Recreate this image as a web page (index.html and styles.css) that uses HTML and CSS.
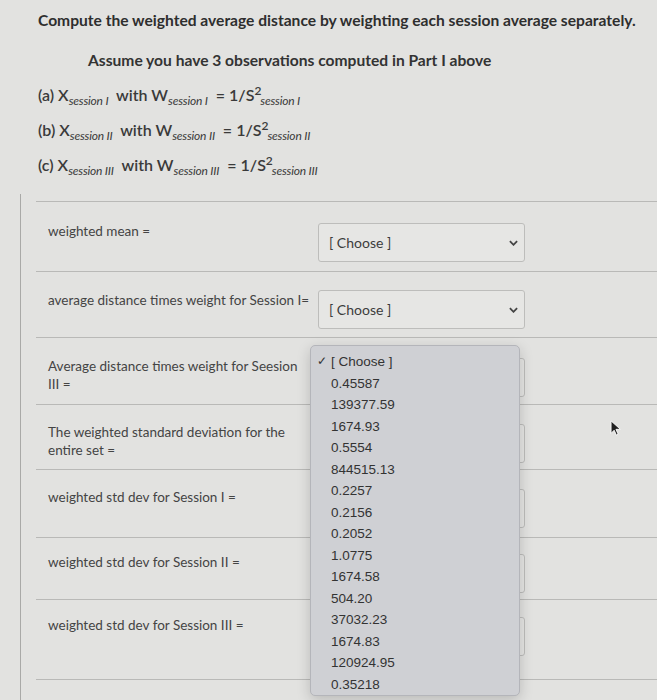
FILE: index.html
```html
<!DOCTYPE html>
<html>
<head>
  <link rel="stylesheet" href="styles.css">
</head>
<body>
  <div class="question">
	<p class="title">Compute the weighted average distance by weighting each session average separately.</p>
	<p class="assume">Assume you have 3 observations computed in Part I above</p>
	<p class="formula">(a) X<sub>session I</sub> with W<sub>session I</sub> = 1/S<sup>2</sup><sub>session I</sub></p>
	<p class="formula">(b) X<sub>session II</sub> with W<sub>session II</sub> = 1/S<sup>2</sup><sub>session II</sub></p>
	<p class="formula">(c) X<sub>session III</sub> with W<sub>session III</sub> = 1/S<sup>2</sup><sub>session III</sub></p>
  </div>

  <div class="answers">
	<div class="answer-table">
	  <div class="row r1">
		<div class="label">weighted mean =</div>
		<div class="select">[ Choose ]<svg class="chevron" viewBox="0 0 10 6"><path d="M1 1l4 4 4-4"/></svg></div>
	  </div>
	  <div class="row r2">
		<div class="label">average distance times weight for Session I=</div>
		<div class="select">[ Choose ]<svg class="chevron" viewBox="0 0 10 6"><path d="M1 1l4 4 4-4"/></svg></div>
	  </div>
	  <!-- the open menu covers the selects below, only their right edge shows -->
	  <div class="row r3">
		<div class="label">Average distance times weight for Seesion III =</div>
		<div class="select"></div>
	  </div>
	  <div class="row r4">
		<div class="label">The weighted standard deviation for the entire set =</div>
		<div class="select"></div>
	  </div>
	  <div class="row r5">
		<div class="label">weighted std dev for Session I =</div>
		<div class="select"></div>
	  </div>
	  <div class="row r6">
		<div class="label">weighted std dev for Session II =</div>
		<div class="select"></div>
	  </div>
	  <div class="row r7">
		<div class="label">weighted std dev for Session III =</div>
		<div class="select"></div>
	  </div>
	</div>

	<ul class="dropdown">
	  <li class="checked"><span class="check">✓</span>[ Choose ]</li>
	  <li>0.45587</li>
	  <li>139377.59</li>
	  <li>1674.93</li>
	  <li>0.5554</li>
	  <li>844515.13</li>
	  <li>0.2257</li>
	  <li>0.2156</li>
	  <li>0.2052</li>
	  <li>1.0775</li>
	  <li>1674.58</li>
	  <li>504.20</li>
	  <li>37032.23</li>
	  <li>1674.83</li>
	  <li>120924.95</li>
	  <li>0.35218</li>
	</ul>
  </div>

  <svg class="cursor" viewBox="0 0 12 18">
	<path d="M1 1v14l3.5-3.5 2.5 5.5 2-1-2.5-5.5h5z"/>
  </svg>
</body>
</html>
```

FILE: styles.css
```css
:root {
  --color-bg: #e2e2e0;
  --color-text: #3a3a3a;
  --color-line: #b9b9b7;
  --color-menu: #cfd0d4;
}

body, html {
  margin: 0;
  padding: 0;
}

body {
  position: relative;
  height: 700px;
  overflow: hidden;
  background: var(--color-bg);
  font-family: Lato, "Open Sans", sans-serif;
  color: var(--color-text);
}

.question {
  padding: 10px 0 0 38px;
}

.question p {
  margin: 0;
  line-height: 20px;
}

.title {
  font-size: 15.6px;
  font-weight: 700;
  color: #2e2e2e;
}

.assume {
  margin-top: 20px !important;
  margin-left: 50px !important;
  font-size: 15.6px;
  font-weight: 700;
  color: #333;
}

.formula {
  margin-top: 15px !important;
  font-size: 16px;
  font-weight: 600;
}

.formula sub,
.formula sup {
  line-height: 0;
  font-size: 12px;
}

.formula sub {
  font-style: italic;
  font-weight: 400;
  letter-spacing: -0.2px;
  margin-right: 4px;
}

.formula sup {
  margin-right: -1px;
}

.answers {
  position: relative;
  margin: 19px 0 0 20px;
  padding: 7px 0 0 15px;
  border-left: 1px solid #a9a9a7;
  height: 500px;
}

.answer-table {
  border-top: 1px solid var(--color-line);
}

.row {
  display: flex;
  align-items: flex-start;
  box-sizing: border-box;
  padding: 19px 0 0 12px;
  border-bottom: 1px solid var(--color-line);
}

.r1 { height: 70px; padding-top: 20px; }
.r2 { height: 66px; padding-top: 19px; }
.r3 { height: 67px; padding-top: 19px; }
.r4 { height: 65px; padding-top: 18px; }
.r5 { height: 68px; padding-top: 18px; }
.r6 { height: 62px; padding-top: 15px; }
.r7 { height: 80px; padding-top: 16px; }

.label {
  width: 270px;
  font-size: 13.5px;
  line-height: 18px;
  color: #444;
}

.r3 .label {
  width: 258px;
  margin-right: 12px;
}

.select {
  display: flex;
  align-items: center;
  justify-content: space-between;
  width: 207px;
  height: 39px;
  margin-top: 1px;
  padding: 0 6px 0 10px;
  box-sizing: border-box;
  border: 1px solid #bdbdbb;
  border-radius: 3px;
  background: #e6e6e4;
  font-size: 14px;
  color: #3c3c3c;
}

.r2 .select {
  margin-top: -1px;
}

.chevron {
  width: 9px;
  height: 6px;
  fill: none;
  stroke: #444;
  stroke-width: 2;
}

.dropdown {
  position: absolute;
  top: 151px;
  left: 289px;
  width: 208px;
  margin: 0;
  padding: 5px 0 0;
  list-style: none;
  background: var(--color-menu);
  border: 1px solid #b4b5ba;
  border-radius: 5px;
  box-shadow: 0 4px 14px rgba(0, 0, 0, 0.18);
  font-family: "Liberation Sans", Arial, sans-serif;
  font-size: 13.5px;
  color: #333;
}

.dropdown li {
  height: 21.5px;
  line-height: 21.5px;
  padding-left: 20px;
  position: relative;
}

.check {
  position: absolute;
  left: 6px;
  font-size: 12px;
}

.cursor {
  position: absolute;
  left: 610px;
  top: 420px;
  width: 11px;
  height: 16px;
  fill: #222;
  stroke: #fff;
  stroke-width: 1;
}
```
